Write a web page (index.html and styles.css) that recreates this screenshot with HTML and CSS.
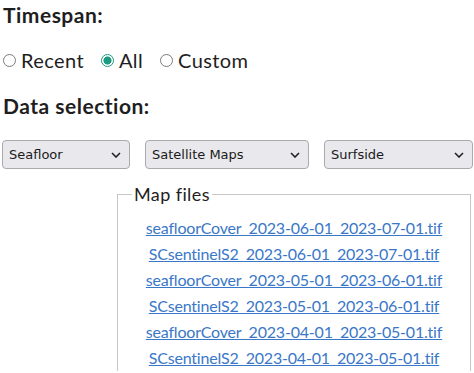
FILE: index.html
```html
<!doctype html>
<html>
<head>
<meta charset="utf-8">
<title>Map files</title>
<link rel="stylesheet" href="styles.css">
</head>
<body>

	<h3 class="label">Timespan:</h3>
	<div class="radios">
		<label class="radio"><input type="radio" name="span" value="recent"><span class="dot"></span>Recent</label>
		<label class="radio"><input type="radio" name="span" value="all" checked><span class="dot"></span>All</label>
		<label class="radio"><input type="radio" name="span" value="custom"><span class="dot"></span>Custom</label>
	</div>

	<h3 class="label">Data selection:</h3>
	<div class="selects">
		<select class="pick pick-area"><option>Seafloor</option></select>
		<select class="pick pick-type"><option>Satellite Maps</option></select>
		<select class="pick pick-site"><option>Surfside</option></select>
	</div>

	<fieldset class="files">
		<legend>Map files</legend>
		<a href="#">seafloorCover_2023-06-01_2023-07-01.tif</a>
		<a href="#">SCsentinelS2_2023-06-01_2023-07-01.tif</a>
		<a href="#">seafloorCover_2023-05-01_2023-06-01.tif</a>
		<a href="#">SCsentinelS2_2023-05-01_2023-06-01.tif</a>
		<a href="#">seafloorCover_2023-04-01_2023-05-01.tif</a>
		<a href="#">SCsentinelS2_2023-04-01_2023-05-01.tif</a>
	</fieldset>

</body>
</html>
```

FILE: styles.css
```css
body {
	margin: 0;
	padding: 0 2px 0 3px;
	font-family: Lato, "Noto Sans", sans-serif;
	color: #1e1e1e;
	background: #ffffff;
	overflow: hidden;
}

.label {
	font-size: 21px;
	font-weight: bold;
	letter-spacing: 0.5px;
	line-height: 24px;
	margin: 3px 0 0 0;
}

.radios {
	display: flex;
	align-items: center;
	gap: 17px;
	font-size: 20px;
	letter-spacing: 0.4px;
	line-height: 24px;
	margin: 21px 0 22px 0;
}

.radio {
	display: flex;
	align-items: center;
	gap: 5px;
}

.radio input {
	display: none;
}

.dot {
	width: 11px;
	height: 11px;
	border: 1px solid #7b7b7b;
	border-radius: 50%;
	box-sizing: content-box;
}

.radio input:checked + .dot {
	border: 1px solid #1d9b82;
	background: radial-gradient(circle, #1d9b82 0 3.8px, #ffffff 4.3px);
}

.selects {
	display: flex;
	justify-content: space-between;
	margin: 22px -1px 0 -1px;
}

.pick {
	-webkit-appearance: none;
	appearance: none;
	height: 29px;
	padding: 0 6px;
	font-family: "DejaVu Sans", Verdana, sans-serif;
	font-size: 13px;
	color: #1a1a1a;
	background: #e9e9ed url("data:image/svg+xml;utf8,<svg xmlns='http://www.w3.org/2000/svg' width='10' height='6'><path d='M1 1l4 4 4-4' fill='none' stroke='%23222' stroke-width='1.6'/></svg>") no-repeat right 8px center;
	border: 1px solid #a9a9ae;
	border-radius: 4px;
}

.pick-area { width: 128px; }
.pick-type { width: 164px; }
.pick-site { width: 149px; }

.files {
	margin: 14px 1px 0 114px;
	padding: 10px 0 0 0;
	border: 1px solid #c6c6c6;
	border-bottom: none;
	display: flex;
	flex-direction: column;
	align-items: center;
}

.files legend {
	font-size: 18px;
	letter-spacing: 0.4px;
	padding: 0 2px;
	margin-left: 14px;
}

.files a {
	color: #3a77c8;
	font-size: 16px;
	letter-spacing: -0.2px;
	line-height: 26px;
}
```
